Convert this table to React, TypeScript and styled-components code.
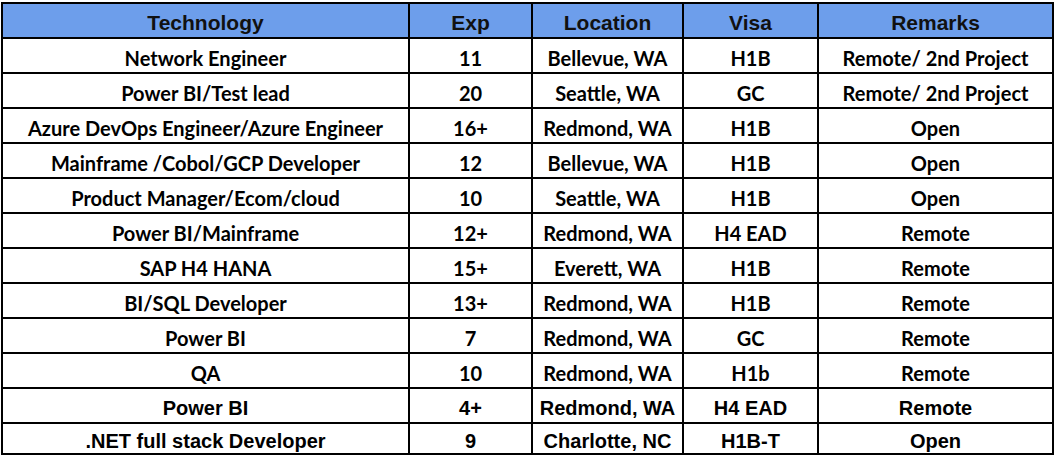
import React from "react";
import styled, { createGlobalStyle } from "styled-components";

const Global = createGlobalStyle`
  html, body { margin: 0; padding: 0; background: #ffffff; }
  body { font-family: "Liberation Sans", Arial, sans-serif; }
`;

const Page = styled.div`
  padding: 2px 0 0 1px;
`;

const Grid = styled.div`
  display: grid;
  grid-template-columns: 407px 123px 151px 135px 235px;
  width: max-content;
  border-left: 2px solid #000;
  border-top: 2px solid #000;
`;

const Cell = styled.div<{ $head?: boolean; $arial?: boolean; $h: number }>`
  box-sizing: border-box;
  height: ${(p) => p.$h}px;
  display: flex;
  align-items: center;
  justify-content: center;
  padding-top: ${(p) => (p.$arial && !p.$head ? 5 : 4)}px;
  border-right: 2px solid #000;
  border-bottom: 2px solid #000;
  background: ${(p) => (p.$head ? "#6d9eeb" : "#ffffff")};
  color: ${(p) => (p.$head ? "#111111" : "#000000")};
  font-weight: 700;
  white-space: nowrap;
  font-family: ${(p) =>
    p.$head || p.$arial ? '"Liberation Sans", Arial, sans-serif' : 'Lato, "Open Sans", sans-serif'};
  font-size: ${(p) => (p.$head ? 21 : 20)}px;
`;

const header = ["Technology", "Exp", "Location", "Visa", "Remarks"];

const rows: { c: string[]; arial?: boolean; h?: number }[] = [
  { c: ["Network Engineer", "11", "Bellevue, WA", "H1B", "Remote/ 2nd Project"] },
  { c: ["Power BI/Test lead", "20", "Seattle, WA", "GC", "Remote/ 2nd Project"] },
  { c: ["Azure DevOps Engineer/Azure Engineer", "16+", "Redmond, WA", "H1B", "Open"] },
  { c: ["Mainframe /Cobol/GCP Developer", "12", "Bellevue, WA", "H1B", "Open"] },
  { c: ["Product Manager/Ecom/cloud", "10", "Seattle, WA", "H1B", "Open"] },
  { c: ["Power BI/Mainframe", "12+", "Redmond, WA", "H4 EAD", "Remote"] },
  { c: ["SAP H4 HANA", "15+", "Everett, WA", "H1B", "Remote"] },
  { c: ["BI/SQL Developer", "13+", "Redmond, WA", "H1B", "Remote"] },
  { c: ["Power BI", "7", "Redmond, WA", "GC", "Remote"] },
  { c: ["QA", "10", "Redmond, WA", "H1b", "Remote"] },
  { c: ["Power BI", "4+", "Redmond, WA", "H4 EAD", "Remote"], arial: true },
  { c: [".NET full stack Developer", "9", "Charlotte, NC", "H1B-T", "Open"], arial: true, h: 31 },
];

export default function App() {
  return (
    <>
      <Global />
      <Page>
        <Grid>
          {header.map((t) => (
            <Cell key={t} $head $h={35}>
              {t}
            </Cell>
          ))}
          {rows.map((r, i) =>
            r.c.map((t, j) => (
              <Cell key={`${i}-${j}`} $arial={r.arial} $h={r.h ?? 35}>
                {t}
              </Cell>
            ))
          )}
        </Grid>
      </Page>
    </>
  );
}
